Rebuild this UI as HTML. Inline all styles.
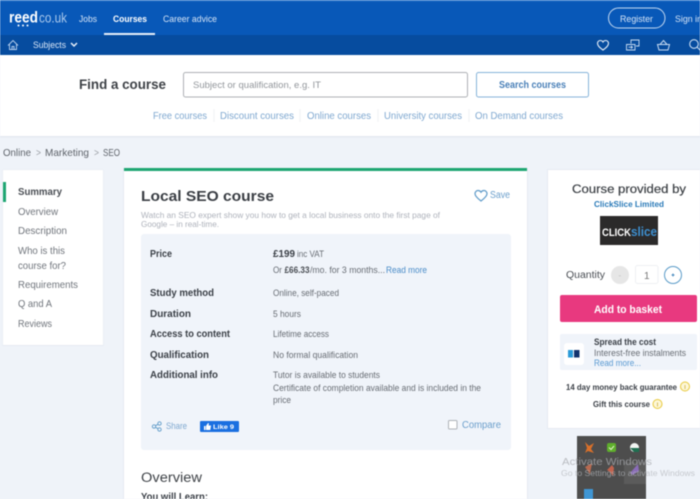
<!DOCTYPE html>
<html><head><meta charset="utf-8"><title>Local SEO course</title>
<style>
html,body{margin:0;padding:0;width:700px;height:499px;overflow:hidden;background:#eff3f9}
svg{display:block;filter:blur(.55px)}
text{font-family:"Liberation Sans",sans-serif;white-space:pre}
.b{font-weight:700}
.l{font-size:10px;font-weight:700;fill:#3a3f46}
.v{font-size:9px;fill:#686d74}
.n{font-size:10.5px;fill:#70757c}
.t{font-size:10px;fill:#7fa8d0}
.w{font-size:9.5px;fill:#fff}
</style></head><body>
<svg width="700" height="499" viewBox="0 0 700 499" xmlns="http://www.w3.org/2000/svg">
<rect width="700" height="499" fill="#eff3f9"/>
<!-- header -->
<rect width="700" height="35" fill="#0858b8"/>
<rect width="700" height="1.500" fill="#2a74c8"/>
<rect y="35" width="700" height="20" fill="#064c9f"/>
<rect x="104" y="33" width="51" height="2" fill="#e8f0fa"/>
<text x="9" y="22.500" font-size="15.500" class="b" fill="#fff" textLength="29" lengthAdjust="spacingAndGlyphs">reed</text>
<text x="39" y="22.500" font-size="14" fill="#a9c8ec" textLength="28" lengthAdjust="spacingAndGlyphs">co.uk</text>
<circle cx="18.500" cy="25.500" r="1" fill="#fff"/><circle cx="23" cy="25.500" r="1" fill="#fff"/><circle cx="27.500" cy="25.500" r="1" fill="#fff"/>
<text x="79" y="22" class="w" style="fill:#d5e4f6" textLength="18" lengthAdjust="spacingAndGlyphs">Jobs</text>
<text x="113" y="22" class="w b" textLength="34" lengthAdjust="spacingAndGlyphs">Courses</text>
<text x="163" y="22" class="w" style="fill:#d5e4f6" textLength="54" lengthAdjust="spacingAndGlyphs">Career advice</text>
<rect x="608.500" y="8" width="56.500" height="20" rx="10" fill="none" stroke="#c3d8f0" stroke-width="1"/>
<text x="620" y="22" class="w" style="fill:#d5e4f6" textLength="33" lengthAdjust="spacingAndGlyphs">Register</text>
<text x="675" y="22" class="w" style="fill:#d5e4f6" textLength="27" lengthAdjust="spacingAndGlyphs">Sign in</text>
<!-- subnav -->
<path d="M8 45.500 13 40.500 18 45.500M9.500 44.500V49.500H16.500V44.500M12 49.500V46.500H14V49.500" fill="none" stroke="#b9d2ef" stroke-width=".9"/>
<text x="33" y="48" class="w" style="fill:#dbe8f8" textLength="33" lengthAdjust="spacingAndGlyphs">Subjects</text>
<path d="M71 43 74 46 77 43" fill="none" stroke="#e8f0fa" stroke-width="1.500"/>
<path d="M603 50C599 47 597.500 45.500 597.500 43.300 597.500 41.500 599 40.500 600.300 40.500 601.500 40.500 602.500 41.100 603 42 603.500 41.100 604.500 40.500 605.700 40.500 607 40.500 608.500 41.500 608.500 43.300 608.500 45.500 607 47 603 50Z" fill="none" stroke="#e8f0fa" stroke-width="1.100"/>
<path d="M631 43.500V40H639V46H636M626.500 44.500H635V50H626.500ZM628.500 47.200H632.500M631 45.800 632.500 47.200 631 48.600" fill="none" stroke="#c8dcf3" stroke-width=".9"/>
<path d="M657.500 44.500H669.500L668 50H659ZM660 44.500 663.500 40.500 667 44.500" fill="none" stroke="#c8dcf3" stroke-width="1"/>
<circle cx="694" cy="44" r="4.300" fill="none" stroke="#c8dcf3" stroke-width="1.100"/><path d="M697 47 700 50" stroke="#c8dcf3" stroke-width="1.100"/>
<!-- search -->
<rect y="55" width="700" height="81" fill="#fff"/>
<rect y="136" width="700" height="1.500" fill="#e4e9f1"/>
<text x="79" y="89" font-size="13.500" class="b" fill="#3e4247" textLength="87" lengthAdjust="spacingAndGlyphs">Find a course</text>
<rect x="183.500" y="72.500" width="284" height="24.500" rx="2" fill="#fff" stroke="#aeb1b5"/>
<text x="193" y="88" font-size="9.500" fill="#92969b" textLength="128" lengthAdjust="spacingAndGlyphs">Subject or qualification, e.g. IT</text>
<rect x="476.500" y="72.500" width="112" height="24.500" rx="2" fill="#fff" stroke="#86b3d9"/>
<text x="499" y="88" font-size="10" fill="#4a80b8" class="b" textLength="67" lengthAdjust="spacingAndGlyphs">Search courses</text>
<text x="153" y="119" class="t" textLength="54" lengthAdjust="spacingAndGlyphs">Free courses</text>
<text x="220" y="119" class="t" textLength="74" lengthAdjust="spacingAndGlyphs">Discount courses</text>
<text x="307" y="119" class="t" textLength="64" lengthAdjust="spacingAndGlyphs">Online courses</text>
<text x="384" y="119" class="t" textLength="78" lengthAdjust="spacingAndGlyphs">University courses</text>
<text x="475" y="119" class="t" textLength="88" lengthAdjust="spacingAndGlyphs">On Demand courses</text>
<g stroke="#eff2f5"><path d="M214 109V122M300 109V122M378 109V122M469 109V122"/></g>
<!-- breadcrumb -->
<g font-size="10.500" fill="#5e636a">
<text x="3" y="156" textLength="28" lengthAdjust="spacingAndGlyphs">Online</text>
<text x="36" y="156" fill="#9a9ea4" textLength="5" lengthAdjust="spacingAndGlyphs">&gt;</text>
<text x="45" y="156" textLength="44" lengthAdjust="spacingAndGlyphs">Marketing</text>
<text x="94" y="156" fill="#9a9ea4" textLength="5" lengthAdjust="spacingAndGlyphs">&gt;</text>
<text x="103" y="156" textLength="17" lengthAdjust="spacingAndGlyphs">SEO</text>
</g>
<!-- sidebar -->
<rect x="2.500" y="169.500" width="101" height="176.500" fill="#e6ebf3"/>
<rect x="3" y="170" width="100" height="175" fill="#fff"/>
<rect x="3" y="182" width="3" height="20" fill="#1ea672"/>
<text x="18" y="195" font-size="10.500" class="b" fill="#4a4e54" textLength="44" lengthAdjust="spacingAndGlyphs">Summary</text>
<text x="18" y="215" class="n" textLength="40" lengthAdjust="spacingAndGlyphs">Overview</text>
<text x="18" y="234" class="n" textLength="49" lengthAdjust="spacingAndGlyphs">Description</text>
<text x="18" y="254" class="n" textLength="47" lengthAdjust="spacingAndGlyphs">Who is this</text>
<text x="18" y="269" class="n" textLength="48" lengthAdjust="spacingAndGlyphs">course for?</text>
<text x="18" y="288" class="n" textLength="60" lengthAdjust="spacingAndGlyphs">Requirements</text>
<text x="18" y="307" class="n" textLength="34" lengthAdjust="spacingAndGlyphs">Q and A</text>
<text x="18" y="327" class="n" textLength="34" lengthAdjust="spacingAndGlyphs">Reviews</text>
<!-- main card -->
<rect x="123" y="168" width="405" height="331" fill="#e6ebf3"/>
<rect x="124" y="168" width="403" height="331" fill="#fff"/>
<rect x="124" y="168" width="403" height="3" fill="#1ea672"/>
<text x="141" y="201" font-size="15" class="b" fill="#3a3e44" textLength="133" lengthAdjust="spacingAndGlyphs">Local SEO course</text>
<text x="141" y="218" font-size="8.500" fill="#aeb2bb" textLength="299" lengthAdjust="spacingAndGlyphs">Watch an SEO expert show you how to get a local business onto the first page of</text>
<text x="141" y="227" font-size="8.500" fill="#aeb2bb" textLength="78" lengthAdjust="spacingAndGlyphs">Google – in real-time.</text>
<path d="M481 201C477 198 475 196 475 193.800 475 191.800 476.500 190.500 478 190.500 479.300 190.500 480.400 191.200 481 192.200 481.600 191.200 482.700 190.500 484 190.500 485.500 190.500 487 191.800 487 193.800 487 196 485 198 481 201Z" fill="none" stroke="#5f9bc9" stroke-width="1.200"/>
<text x="490" y="198" font-size="10" fill="#6a9ecb" textLength="20" lengthAdjust="spacingAndGlyphs">Save</text>
<rect x="141" y="234" width="370" height="216" rx="3" fill="#f0f4fa"/>
<text x="150" y="257" class="l" textLength="22" lengthAdjust="spacingAndGlyphs">Price</text>
<text x="150" y="296" class="l" textLength="64" lengthAdjust="spacingAndGlyphs">Study method</text>
<text x="150" y="317" class="l" textLength="41" lengthAdjust="spacingAndGlyphs">Duration</text>
<text x="150" y="337" class="l" textLength="80" lengthAdjust="spacingAndGlyphs">Access to content</text>
<text x="150" y="358" class="l" textLength="59" lengthAdjust="spacingAndGlyphs">Qualification</text>
<text x="150" y="378" class="l" textLength="68" lengthAdjust="spacingAndGlyphs">Additional info</text>
<text x="273" y="257" font-size="10" class="b" fill="#3a3f46" textLength="22" lengthAdjust="spacingAndGlyphs">£199</text>
<text x="297" y="257" class="v" textLength="27" lengthAdjust="spacingAndGlyphs">inc VAT</text>
<text x="273" y="273" class="v" textLength="9" lengthAdjust="spacingAndGlyphs">Or</text>
<text x="284.500" y="273" font-size="9" class="b" fill="#4a4e54" textLength="25" lengthAdjust="spacingAndGlyphs">£66.33</text>
<text x="310" y="273" class="v" textLength="75" lengthAdjust="spacingAndGlyphs">/mo. for 3 months...</text>
<text x="386" y="273" font-size="9" fill="#4a8cc8" textLength="41" lengthAdjust="spacingAndGlyphs">Read more</text>
<text x="273" y="296" class="v" textLength="66" lengthAdjust="spacingAndGlyphs">Online, self-paced</text>
<text x="273" y="317" class="v" textLength="28" lengthAdjust="spacingAndGlyphs">5 hours</text>
<text x="273" y="337" class="v" textLength="56" lengthAdjust="spacingAndGlyphs">Lifetime access</text>
<text x="273" y="358" class="v" textLength="85" lengthAdjust="spacingAndGlyphs">No formal qualification</text>
<text x="273" y="378" class="v" textLength="107" lengthAdjust="spacingAndGlyphs">Tutor is available to students</text>
<text x="273" y="391" class="v" textLength="208" lengthAdjust="spacingAndGlyphs">Certificate of completion available and is included in the</text>
<text x="273" y="403" class="v" textLength="18" lengthAdjust="spacingAndGlyphs">price</text>
<g fill="none" stroke="#5f9bc9" stroke-width=".9"><circle cx="154" cy="426.500" r="1.700"/><circle cx="159.500" cy="423.500" r="1.700"/><circle cx="159.500" cy="429.500" r="1.700"/><path d="M155.500 425.700 158 424.300M155.500 427.300 158 428.700"/></g>
<text x="166" y="429" font-size="9" fill="#7fa8d0" textLength="21" lengthAdjust="spacingAndGlyphs">Share</text>
<rect x="200" y="421" width="39" height="11" rx="1" fill="#1a6fe0"/>
<path d="M204 426H205.500V430H204ZM206 426 208 423 209 423.500 208.500 425.500H211L210.300 430H206Z" fill="#fff"/>
<text x="213" y="429" font-size="6.500" class="b" fill="#fff" textLength="21" lengthAdjust="spacingAndGlyphs">Like 9</text>
<rect x="448.500" y="420.500" width="8.500" height="8.500" rx="1" fill="#fff" stroke="#aeb2b8"/>
<text x="462" y="428" font-size="10" fill="#6a9ecb" textLength="39" lengthAdjust="spacingAndGlyphs">Compare</text>
<text x="141" y="482" font-size="13.500" fill="#3e4247" textLength="61" lengthAdjust="spacingAndGlyphs">Overview</text>
<text x="141" y="500" font-size="10" class="b" fill="#3a3f46" textLength="67" lengthAdjust="spacingAndGlyphs">You will Learn:</text>
<!-- right card -->
<rect x="547" y="169" width="153" height="260" fill="#e6ebf3"/>
<rect x="548" y="170" width="152" height="258" fill="#fff"/>
<text x="572" y="193" font-size="11.500" fill="#3e4247" stroke="#3e4247" stroke-width=".2" textLength="114" lengthAdjust="spacingAndGlyphs">Course provided by</text>
<text x="594" y="207" font-size="8.500" class="b" fill="#2a7ab8" textLength="70" lengthAdjust="spacingAndGlyphs">ClickSlice Limited</text>
<rect x="600" y="216" width="58" height="29" fill="#2b2a2a"/>
<text x="602" y="236" font-size="11" class="b" fill="#fff" textLength="29" lengthAdjust="spacingAndGlyphs">CLICK</text>
<text x="631" y="236" font-size="13" class="b" fill="#3d8fd0" textLength="26" lengthAdjust="spacingAndGlyphs">slice</text>
<text x="566" y="278" font-size="10" fill="#4a4e54" textLength="39" lengthAdjust="spacingAndGlyphs">Quantity</text>
<circle cx="620" cy="275" r="9" fill="#e6e6e6"/>
<text x="618.500" y="278" font-size="8" fill="#bbb">-</text>
<rect x="635.500" y="265.500" width="22.500" height="18" rx="2" fill="#fff" stroke="#eef0f3"/>
<text x="644" y="279" font-size="10" fill="#777">1</text>
<circle cx="673" cy="275" r="8.500" fill="#fff" stroke="#5a9bc8"/>
<path d="M671.500 275H674.500M673 273.500V276.500" stroke="#4a8cc0"/>
<rect x="560" y="295" width="137" height="27" rx="2" fill="#e8397f"/>
<text x="594" y="313" font-size="11" class="b" fill="#fff" textLength="68" lengthAdjust="spacingAndGlyphs">Add to basket</text>
<rect x="560" y="334" width="137" height="36" rx="2" fill="#f0f4fa"/>
<rect x="564" y="343" width="20" height="22" rx="3" fill="#fff"/>
<rect x="568" y="350" width="5" height="7.500" fill="#2a9ad8"/><rect x="574" y="350" width="5.500" height="7.500" fill="#12336e"/>
<text x="594" y="345" font-size="9" class="b" fill="#3a3f46" textLength="62" lengthAdjust="spacingAndGlyphs">Spread the cost</text>
<text x="594" y="356" font-size="9" fill="#686d74" textLength="92" lengthAdjust="spacingAndGlyphs">Interest-free instalments</text>
<text x="594" y="366" font-size="9" fill="#5a9ad2" textLength="47" lengthAdjust="spacingAndGlyphs">Read more...</text>
<text x="566" y="390" font-size="8.500" class="b" fill="#3a3f46" textLength="111" lengthAdjust="spacingAndGlyphs">14 day money back guarantee</text>
<circle cx="685" cy="386.500" r="4.500" fill="#fdf7d8" stroke="#e8c93c" stroke-width="1"/><path d="M685 385V389" stroke="#c9a92c" stroke-width=".7"/>
<text x="593" y="407" font-size="8.500" class="b" fill="#3a3f46" textLength="57" lengthAdjust="spacingAndGlyphs">Gift this course</text>
<circle cx="657.500" cy="404" r="4.500" fill="#fdf7d8" stroke="#e8c93c" stroke-width="1"/><path d="M657.500 402.500V406.500" stroke="#c9a92c" stroke-width=".7"/>
<!-- tray -->
<rect x="577" y="436" width="69" height="63" fill="#4d4d4d"/>
<path d="M585 442 589 446 594 443 591 449 594 453 588 451 585 453 587 448Z" fill="#d9702a"/>
<rect x="607" y="443" width="9" height="9" rx="2" fill="#5fae2c"/><path d="M609 447.500 611 449.500 614 446" fill="none" stroke="#dff0c8"/>
<circle cx="634.500" cy="447.500" r="4.500" fill="#f2f5f3"/><path d="M630 448H639V452H634Z" fill="#1f6e50"/>
<path d="M585 467 592 463 590 474Z" fill="#b86a50"/>
<path d="M607 470 612 465 614 468 613 476 610 472Z" fill="#c2634e"/>
<rect x="624" y="462" width="22" height="22" fill="#666" opacity=".6"/>
<path d="M630 473 638 464 639 471 633 475Z" fill="#8a6cb8"/>
<rect x="584" y="489" width="9" height="10" fill="#3f96d4"/>
<!-- watermark -->
<text x="562" y="465" font-size="10.500" fill="#a9abb0" opacity=".75" textLength="90" lengthAdjust="spacingAndGlyphs">Activate Windows</text>
<text x="561" y="476" font-size="8" fill="#b4b7bc" opacity=".7" textLength="134" lengthAdjust="spacingAndGlyphs">Go to Settings to activate Windows</text>
</svg>
</body></html>
